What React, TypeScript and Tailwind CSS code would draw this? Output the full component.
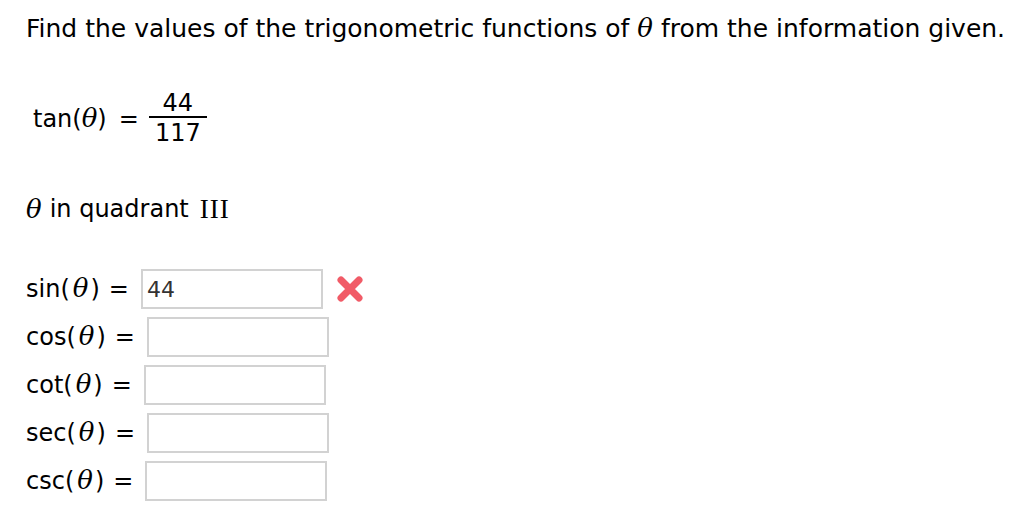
const Theta = ({ className = 'mx-[3px]' }: { className?: string }) => (
  <span className={`font-['DejaVu_Serif',serif] italic text-[26px] leading-none ${className}`}>θ</span>
);

const rows = [
  { fn: 'sin', value: '44', wrong: true },
  { fn: 'cos', value: '' },
  { fn: 'cot', value: '' },
  { fn: 'sec', value: '' },
  { fn: 'csc', value: '' },
];

export default function App() {
  return (
    <div className="min-h-screen bg-white text-black font-['DejaVu_Sans',sans-serif] text-[24px] pl-[26px] pt-[12px]">
      <p className="leading-[34px] text-[25px]">
        Find the values of the trigonometric functions of <Theta className="text-[25px]" /> from the information given.
      </p>

      <div className="flex items-center mt-[43px] h-[60px] pl-[7px]">
        <span>tan(<Theta className="mx-0" />)</span>
        <span className="ml-[12px] mr-[10px]">=</span>
        <div className="flex flex-col items-center">
          <span className="leading-[26px]">44</span>
          <div className="h-[2px] w-[58px] bg-black" />
          <span className="leading-[30px]">117</span>
        </div>
      </div>

      <p className="mt-[45px] leading-[30px] flex items-center">
        <Theta className="mx-0" />
        <span className="ml-[8px]">in quadrant</span>
        <span className="ml-[11px] font-['Liberation_Serif',serif] text-[27px] tracking-[1px]">III</span>
      </p>

      <div className="mt-[45px] flex flex-col gap-[8px]">
        {rows.map((r) => (
          <div key={r.fn} className="flex items-center h-[40px]">
            <span>{r.fn}(<Theta className="ml-[3px] mr-[2px]" />)</span>
            <span className="ml-[9px] mr-[12px]">=</span>
            <div className="w-[182px] h-[40px] border-2 border-[#d2d2d2] flex items-center px-[4px] text-[#333] text-[22px]">
              {r.value}
            </div>
            {r.wrong && (
              <svg className="ml-[13px]" width="28" height="28" viewBox="0 0 28 28">
                <path d="M5 5 L23 23 M23 5 L5 23" stroke="#f04a57" strokeWidth="7" strokeLinecap="round" opacity="0.9" />
              </svg>
            )}
          </div>
        ))}
      </div>
    </div>
  );
}
